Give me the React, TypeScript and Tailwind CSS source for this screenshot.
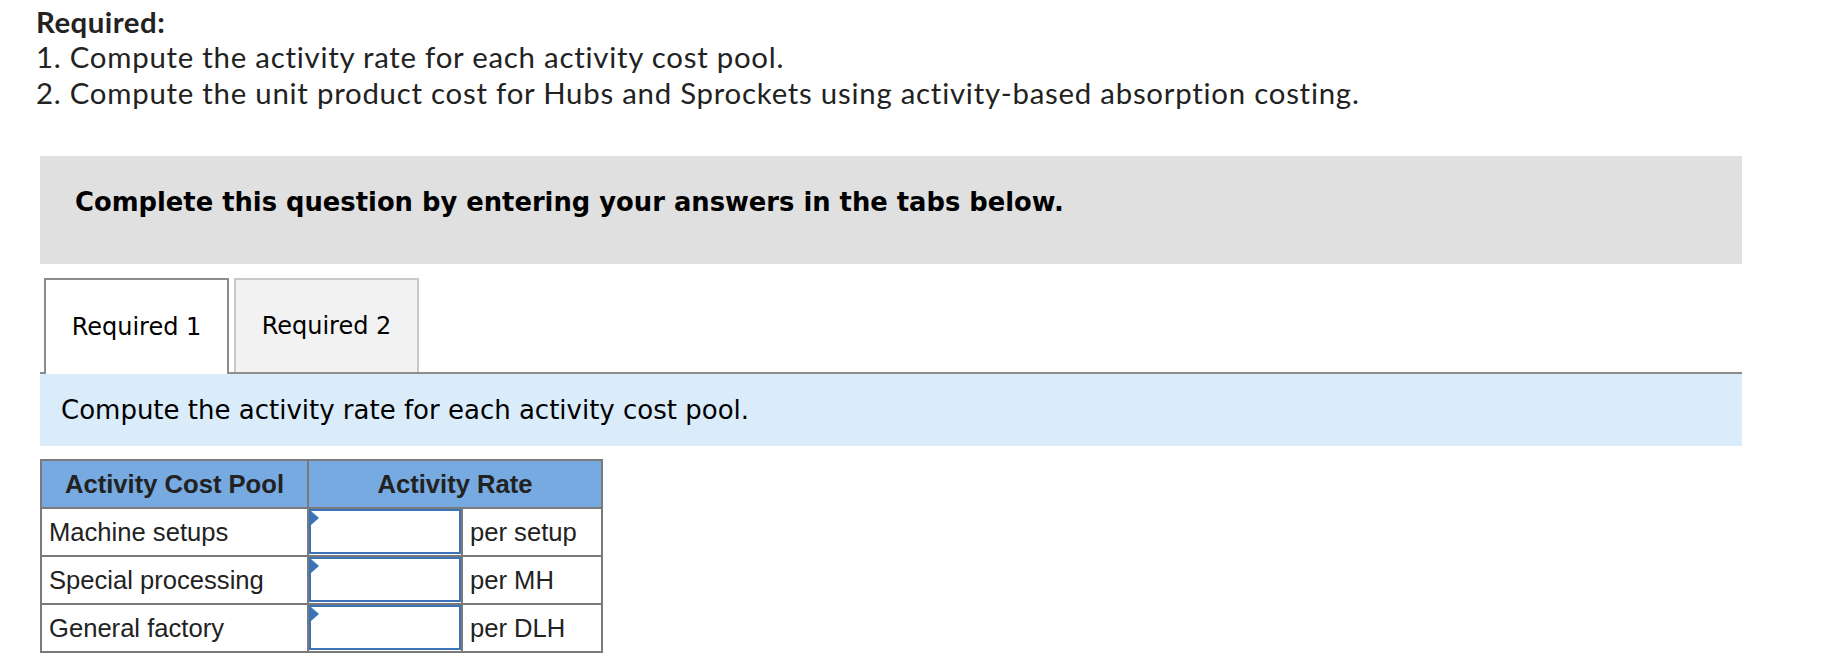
import React from "react";

const rows = [
  { pool: "Machine setups", unit: "per setup" },
  { pool: "Special processing", unit: "per MH" },
  { pool: "General factory", unit: "per DLH" },
];

export default function App() {
  return (
    <div className="w-[1828px] h-[670px] bg-white overflow-hidden">
      <div
        className="pl-[36px] pt-[4px] text-[29.4px] leading-[35.4px] tracking-[0.75px] text-[#222]"
        style={{ fontFamily: "Lato, 'Open Sans', sans-serif" }}
      >
        <div className="font-bold tracking-[0.5px]">Required:</div>
        <div>1. Compute the activity rate for each activity cost pool.</div>
        <div>2. Compute the unit product cost for Hubs and Sprockets using activity-based absorption costing.</div>
      </div>

      <div className="pl-[40px] pr-[86px] mt-[46px]">
        <div
          className="h-[108px] bg-[#e0e0e0] pl-[35px] pt-[27px] text-[25.8px] font-bold text-black"
          style={{ fontFamily: "'DejaVu Sans', Verdana, sans-serif" }}
        >
          Complete this question by entering your answers in the tabs below.
        </div>

        <div
          className="flex items-start gap-[5px] pl-[4px] mt-[14px] text-[24px] text-black"
          style={{ fontFamily: "'DejaVu Sans', Verdana, sans-serif" }}
        >
          <div className="relative z-10 w-[185px] h-[96px] mb-[-2px] bg-white border-2 border-b-0 border-[#8c8c8c] flex items-center justify-center">
            Required 1
          </div>
          <div className="w-[185px] h-[94px] bg-[#f2f2f2] border-2 border-b-0 border-[#c8c8c8] flex items-center justify-center">
            Required 2
          </div>
        </div>

        <div
          className="border-t-2 border-[#8c8c8c] bg-[#daebf9] h-[74px] pl-[21px] flex items-center text-[26px] text-black"
          style={{ fontFamily: "'DejaVu Sans', Verdana, sans-serif" }}
        >
          Compute the activity rate for each activity cost pool.
        </div>

        <table
          className="mt-[13px] border-collapse text-[25.6px] text-[#222]"
          style={{ fontFamily: "'Liberation Sans', Arial, sans-serif" }}
        >
          <thead>
            <tr className="bg-[#77aae0]">
              <th className="border-2 border-[#7a7a7a] w-[267px] h-[48px] p-0 font-bold text-center">
                Activity Cost Pool
              </th>
              <th colSpan={2} className="border-2 border-[#7a7a7a] h-[48px] p-0 font-bold text-center">
                Activity Rate
              </th>
            </tr>
          </thead>
          <tbody>
            {rows.map((r) => (
              <tr key={r.pool}>
                <td className="border-2 border-[#7a7a7a] h-[48px] pl-[7px] py-0 text-left">{r.pool}</td>
                <td className="relative border-2 border-[#7a7a7a] w-[154px] h-[48px] p-0 align-top">
                  <div className="w-[152px] h-[45px] border-2 border-[#3b73b9] bg-white" />
                  <div className="absolute top-[2px] left-[2px] w-0 h-0 border-t-[7px] border-b-[7px] border-l-[8px] border-t-transparent border-b-transparent border-l-[#3b73b9]" />
                </td>
                <td className="border-2 border-[#7a7a7a] w-[140px] h-[48px] pl-[7px] py-0 text-left">{r.unit}</td>
              </tr>
            ))}
          </tbody>
        </table>
      </div>
    </div>
  );
}
